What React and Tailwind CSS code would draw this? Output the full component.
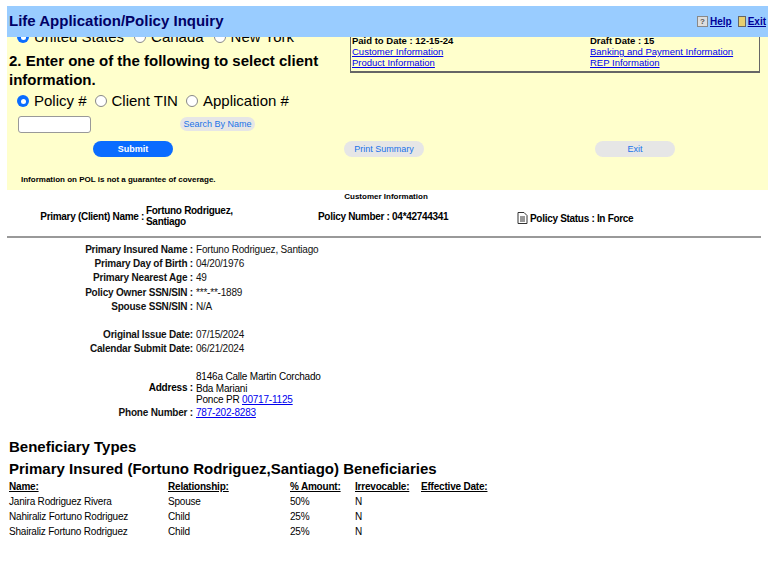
const F = { fontFamily: '"Liberation Sans", Arial, sans-serif' };

function Radio({ on }) {
  return on ? (
    <span className="inline-block w-[12px] h-[12px] rounded-full bg-[#0a6cff] relative mr-[5px]"><span className="absolute left-[3.5px] top-[3.5px] w-[5px] h-[5px] rounded-full bg-white" /></span>
  ) : (
    <span className="inline-block w-[12px] h-[12px] rounded-full border border-[#888] bg-white mr-[5px]" />
  );
}

function Row({ label, children, cls = "" }) {
  return (
    <div className={"flex text-[10px] leading-[14.2px] " + cls}>
      <div className="w-[196px] text-right font-bold text-[#111] pr-[3px] shrink-0 tracking-[-0.2px]">{label}</div>
      <div className="text-[#111] tracking-[-0.2px]">{children}</div>
    </div>
  );
}

export default function App() {
  const bens = [
    ["Janira Rodriguez Rivera", "Spouse", "50%", "N"],
    ["Nahiraliz Fortuno Rodriguez", "Child", "25%", "N"],
    ["Shairaliz Fortuno Rodriguez", "Child", "25%", "N"],
  ];
  return (
    <div style={F} className="w-[768px] h-[561px] bg-white overflow-hidden relative text-black">
      <div className="h-[6px]" />
      <div className="ml-[7px] h-[31px] bg-[#99ccff] flex items-center justify-between pl-[2px] pr-[2px] relative z-10">
        <span className="text-[15px] font-bold text-[#000066]">Life Application/Policy Inquiry</span>
        <span className="flex items-center gap-[6px] text-[10px] font-bold">
          <span className="flex items-center"><span className="inline-block w-[11px] h-[11px] bg-[#ddd] border border-[#888] text-[8px] leading-[9px] text-center text-[#555] mr-[2px]">?</span><a className="text-[#000099] underline">Help</a></span>
          <span className="flex items-center"><span className="inline-block w-[8px] h-[11px] bg-[#e8d070] border border-[#666] mr-[2px]" /><a className="text-[#000099] underline">Exit</a></span>
        </span>
      </div>
      <div className="ml-[7px] h-[153px] bg-[#ffffcc] relative">
        <div className="absolute left-0 top-0 w-[340px] overflow-hidden h-[153px]">
          <div className="flex items-center text-[15px] pl-[10px] mt-[-9px] leading-[18px] gap-[10px]">
            <span className="flex items-center"><Radio on />United States</span>
            <span className="flex items-center"><Radio />Canada</span>
            <span className="flex items-center"><Radio />New York</span>
          </div>
          <div className="text-[15px] font-bold leading-[19px] pl-[2px] mt-[5px] w-[320px]">2. Enter one of the following to select client information.</div>
          <div className="flex items-center text-[15px] pl-[10px] mt-[2px] leading-[20px] gap-[8px]">
            <span className="flex items-center"><Radio on />Policy #</span>
            <span className="flex items-center"><Radio />Client TIN</span>
            <span className="flex items-center"><Radio />Application #</span>
          </div>
        </div>
        <div className="absolute left-[11px] top-[79px] w-[73px] h-[17px] bg-white border border-[#999] rounded-[3px]" />
        <div className="absolute left-[173px] top-[80px] w-[75px] h-[14px] bg-[#e6e6e6] rounded-full text-[9px] leading-[14px] text-[#1a73e8] text-center overflow-hidden whitespace-nowrap">Search By Name</div>
        <div className="absolute left-[86px] top-[104px] w-[80px] h-[16px] bg-[#0a6cff] rounded-full text-[9px] font-bold text-white text-center leading-[16px]">Submit</div>
        <div className="absolute left-[337px] top-[104px] w-[80px] h-[16px] bg-[#e6e6e6] rounded-full text-[9px] text-[#1a73e8] text-center leading-[16px]">Print Summary</div>
        <div className="absolute left-[588px] top-[104px] w-[80px] h-[16px] bg-[#e6e6e6] rounded-full text-[9px] text-[#1a73e8] text-center leading-[16px]">Exit</div>
        <div className="absolute left-[14px] top-[137px] text-[8px] font-bold">Information on POL is not a guarantee of coverage.</div>
        <div className="absolute left-[343px] top-[-4px] w-[410px] h-[40px] border border-[#666] border-b-2 text-[9.5px] leading-[11px] pl-[1px] pt-[1px]">
          <div className="flex"><div className="w-[238px] font-bold">Paid to Date : 12-15-24</div><div className="font-bold">Draft Date : 15</div></div>
          <div className="flex"><a className="w-[238px] text-[#0000ee] underline">Customer Information</a><a className="text-[#0000ee] underline">Banking and Payment Information</a></div>
          <div className="flex"><a className="w-[238px] text-[#0000ee] underline">Product Information</a><a className="text-[#0000ee] underline">REP Information</a></div>
        </div>
      </div>
      <div className="text-center text-[8px] font-bold mt-[1px] h-[12px] ml-[4px]">Customer Information</div>
      <div className="flex items-center text-[10px] font-bold h-[26px] mb-[7px] tracking-[-0.3px]">
        <div className="w-[144px] text-right shrink-0">Primary (Client) Name :</div>
        <div className="w-[174px] pl-[2px] leading-[11px]">Fortuno Rodriguez,<br />Santiago</div>
        <div className="w-[199px] pt-[1px]">Policy Number : 04*42744341</div>
        <div className="flex items-center pt-[4px]">
          <svg width="11" height="12" viewBox="0 0 11 12" className="mr-[2px]"><path d="M1 .5h6l3 3v8H1z" fill="#fff" stroke="#333"/><path d="M3 5h5M3 7h5M3 9h5" stroke="#333"/></svg>
          Policy Status : In Force
        </div>
      </div>
      <div className="ml-[7px] mr-[7px] h-[2px] bg-[#999]" />
      <div className="mt-[5px]">
        <Row label="Primary Insured Name :">Fortuno Rodriguez, Santiago</Row>
        <Row label="Primary Day of Birth :">04/20/1976</Row>
        <Row label="Primary Nearest Age :">49</Row>
        <Row label="Policy Owner SSN/SIN :">***-**-1889</Row>
        <Row label="Spouse SSN/SIN :">N/A</Row>
        <Row label="Original Issue Date:" cls="mt-[14px]">07/15/2024</Row>
        <Row label="Calendar Submit Date:">06/21/2024</Row>
        <div className="flex text-[10px] leading-[11.5px] mt-[15px] tracking-[-0.2px]">
          <div className="w-[196px] text-right font-bold pr-[3px] pt-[11px]">Address :</div>
          <div>8146a Calle Martin Corchado<br />Bda Mariani<br />Ponce PR <a className="text-[#0000ee] underline">00717-1125</a></div>
        </div>
        <Row label="Phone Number :">
          <a className="text-[#0000ee] underline">787-202-8283</a>
        </Row>
      </div>
      <div className="pl-[9px] mt-[17px]">
        <div className="text-[15px] font-bold leading-[20px]">Beneficiary Types</div>
        <div className="text-[15px] font-bold leading-[20px] mt-[2px]">Primary Insured (Fortuno Rodriguez,Santiago) Beneficiaries</div>
        <div className="text-[10px] leading-[15px] tracking-[-0.2px]">
          <div className="flex font-bold underline">
            <span className="w-[159px]">Name:</span><span className="w-[122px]">Relationship:</span><span className="w-[65px]">% Amount:</span><span className="w-[66px]">Irrevocable:</span><span>Effective Date:</span>
          </div>
          {bens.map((b) => (
            <div className="flex" key={b[0]}>
              <span className="w-[159px]">{b[0]}</span><span className="w-[122px]">{b[1]}</span><span className="w-[65px]">{b[2]}</span><span className="w-[66px]">{b[3]}</span>
            </div>
          ))}
        </div>
      </div>
    </div>
  );
}
